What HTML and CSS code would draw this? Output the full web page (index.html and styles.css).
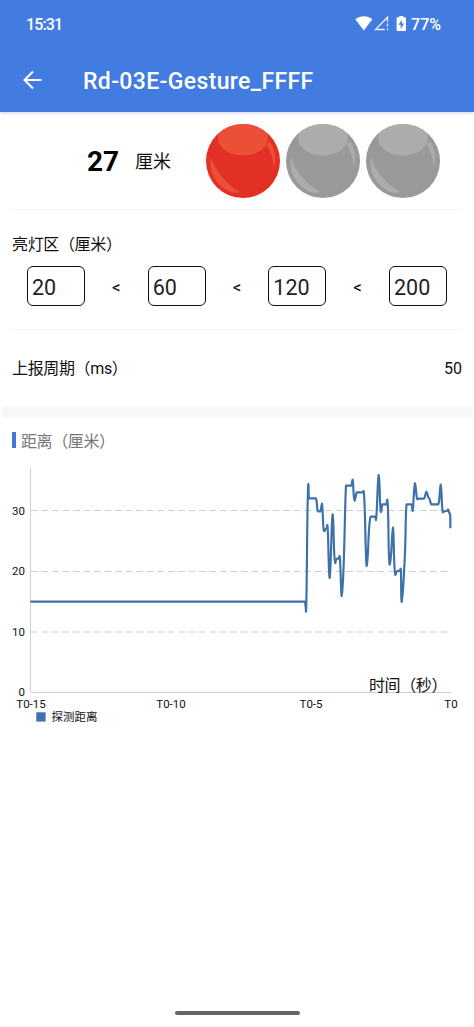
FILE: index.html
```html
<!DOCTYPE html>
<html lang="zh-CN">
<head>
<meta charset="utf-8">
<title>Rd-03E-Gesture_FFFF</title>
<link rel="stylesheet" href="styles.css">
</head>
<body>
<header class="header">
  <div class="status">
    <span class="clock">15:31</span>
    <svg class="status-icons" width="54" height="18" viewBox="0 0 54 18">
      <path d="M.3 4.200C5.300.3 12.300.3 17.300 4.200L8.800 15.500Z" fill="#fff"/>
      <path d="M32.500 7V2.200L20.500 14.500H29.500M32.500 8.500V11.500M32.500 13.500V15.200" fill="none" stroke="#e6f0ff" stroke-width="1.300"/>
      <path d="M44.300 1h4v1.300h1.800q.9 0 .9.900v11.900q0 .9-.9.900h-7.600q-.9 0-.9-.9V3.200q0-.9.900-.9h1.800z" fill="#fff"/>
      <path d="M46.800 4.800L43.500 9.700H45.700V14L49.100 8.500H46.800Z" fill="#427ce0"/>
    </svg>
    <span class="battery">77%</span>
  </div>
  <div class="appbar">
    <svg class="back" width="20" height="20" viewBox="0 0 20 20"><path d="M19.500 10H2.500M11 1.500L2.500 10L11 18.500" fill="none" stroke="#fff" stroke-width="2"/></svg>
    <h1 class="title">Rd-03E-Gesture_FFFF</h1>
  </div>
</header>
<main>
  <section class="reading">
    <span class="value">27</span><span class="unit">厘米</span>
    <svg width="0" height="0" class="defs">
      <defs>
        <clipPath id="disc"><circle cx="110" cy="110" r="110"/></clipPath>
        <g id="shine" clip-path="url(#disc)">
          <ellipse cx="110" cy="42" rx="74" ry="52"/>
          <path d="M180 62Q186 56 187 50Q214 82 202 134Q200 92 180 62Z"/>
          <path d="M14 99Q40 168 101 202Q77 211 50 189Q9 158 14 99Z"/>
        </g>
      </defs>
    </svg>
    <div class="lamps">
      <svg class="lamp red" viewBox="0 0 220 220"><circle cx="110" cy="110" r="110"/><use href="#shine" class="shine"/></svg>
      <svg class="lamp" viewBox="0 0 220 220"><circle cx="110" cy="110" r="110"/><use href="#shine" class="shine"/></svg>
      <svg class="lamp" viewBox="0 0 220 220"><circle cx="110" cy="110" r="110"/><use href="#shine" class="shine"/></svg>
    </div>
  </section>
  <section class="zones">
    <h2 class="label">亮灯区（厘米）</h2>
    <div class="fields">
      <span class="field">20</span><span class="lt">&lt;</span>
      <span class="field">60</span><span class="lt">&lt;</span>
      <span class="field">120</span><span class="lt">&lt;</span>
      <span class="field">200</span>
    </div>
  </section>
  <section class="period"><span class="label">上报周期（ms）</span><span>50</span></section>
  <div class="band"></div>
  <section class="chart-section">
    <h2 class="chart-title">距离（厘米）</h2>
    <svg class="chart" width="474" height="272" viewBox="0 460 474 272">
      <g stroke="#cfcfcf" stroke-width="1" fill="none">
        <path d="M30.500 468V692.500H451" stroke="#d2d2d2"/>
        <path d="M31 510.500H451M31 571.500H451M31 632H451M31 692.500H451" stroke-dasharray="7 3.500"/>
      </g>
      <path transform="translate(295 460) scale(.33333)" class="series" d="M-794 425H29C31 425 32 440 33 455C36 430 36 100 40 72C42 88 40 110 42 115H63C67 125 65 150 69 154H76C79 148 79 134 81 131C84 145 83 205 87 213C89 215 90 208 92 207C96 207 95 200 97 195C101 220 100 345 104 354C108 330 109 180 113 163C117 185 115 300 121 309C123 299 124 296 127 296C132 297 132 290 134 288C137 305 137 390 140 408C148 370 149 140 153 77H169C171 73 171 62 173 59C176 70 174 110 179 122C182 113 182 105 185 97H202C204 97 205 94 206 93C211 120 211 300 215 318C221 295 219 190 227 170H240C242 171 242 178 243 180C247 150 247 65 251 45C256 65 253 145 258 156C260 150 260 139 262 133H274C276 131 275 122 277 119C282 155 279 300 284 314C290 300 290 219 294 203C297 220 296 330 301 345C304 340 304 334 307 333H314C316 330 315 328 317 326C320 345 317 415 320 426C325 400 326 350 329 300C333 230 331 150 335 133H350C352 137 352 150 353 153C356 135 356 84 360 70C364 84 363 110 367 118C369 115 371 116 374 116H387C391 113 391 98 394 95C398 98 398 113 402 115C406 119 405 126 409 133H430C434 126 434 88 437 74C441 90 439 145 444 157C447 153 450 153 456 153C458 150 458 148 460 149C461 158 466 159 466 171V205"/>
      <g class="ticks">
        <text x="25" y="514.500" text-anchor="end">30</text>
        <text x="25" y="575" text-anchor="end">20</text>
        <text x="25" y="635.500" text-anchor="end">10</text>
        <text x="25" y="696" text-anchor="end">0</text>
        <text x="31" y="708" text-anchor="middle">T0-15</text>
        <text x="171" y="708" text-anchor="middle">T0-10</text>
        <text x="311" y="708" text-anchor="middle">T0-5</text>
        <text x="451" y="708" text-anchor="middle">T0</text>
        <text x="51.500" y="721">探测距离</text>
      </g>
      <rect x="36.300" y="712.300" width="9.300" height="9.300" fill="#3d71b1"/>
      <text class="axis-name" x="369" y="691">时间（秒）</text>
    </svg>
  </section>
</main>
<footer class="nav"><div class="handle"></div></footer>
</body>
</html>
```
FILE: styles.css
```css
* { box-sizing: border-box; }
body {
  margin: 0;
  width: 474px;
  height: 1027px;
  display: flex;
  flex-direction: column;
  overflow: hidden;
  background: #fff;
  color: #111;
  font-family: Roboto, "Noto Sans CJK SC", sans-serif;
}
h1, h2 { margin: 0; font-weight: 400; }
main { flex: 1; }
.header { height: 112px; background: #427ce0; color: #fff; box-shadow: 0 1px 3px #c9d6ee; }
.status { height: 48px; padding: 0 33px 0 26px; display: flex; align-items: center; font-size: 16px; font-weight: 500; }
.clock { flex: 1; letter-spacing: -.9px; }
.status-icons { margin-right: 2px; }
.appbar { height: 64px; padding-left: 22px; display: flex; align-items: center; }
.back { margin-right: 41px; }
.title { font-size: 23px; font-weight: 500; letter-spacing: .36px; padding-top: 2px; }
.reading { height: 98px; margin: 0 12px; padding-left: 75px; display: flex; align-items: center; border-bottom: 1px solid #f3f3f3; }
.value { font-size: 28px; font-weight: 700; color: #000; width: 48px; padding-top: 2px; }
.unit { font-size: 18px; width: 71px; padding-bottom: 1px; }
.defs { position: absolute; }
.lamps { display: flex; gap: 6px; }
.lamp { width: 74px; height: 74px; fill: #999; }
.lamp .shine { fill: #acacac; }
.red { fill: #e23124; }
.lamp.red .shine { fill: #eb5037; }
.zones { height: 120px; margin: 0 12px; padding-top: 23px; border-bottom: 1px solid #f3f3f3; }
.label { font-size: 16px; line-height: 24px; letter-spacing: -.35px; }
.fields { margin: 9px 3px 0 15px; display: flex; justify-content: space-between; align-items: center; width: 420px; }
.field { width: 58px; height: 40px; border: 1.5px solid #111; border-radius: 6px; padding-left: 4px; font-size: 21.5px; line-height: 41px; color: #222; }
.lt { font-size: 17px; padding-top: 2px; }
.period { height: 76px; padding: 1px 12px 0; display: flex; align-items: center; justify-content: space-between; font-size: 16px; }
.band { height: 12px; margin: 0 2px; background: #f7f7f7; }
.chart-title { height: 42px; padding: 1px 12px 0; display: flex; align-items: center; gap: 5px; font-size: 16px; letter-spacing: -.4px; color: #777; }
.chart-title::before { content: ""; width: 4px; height: 16px; background: #4179d9; }
.chart { display: block; }
.series { fill: none; stroke: #3d71aa; stroke-width: 6.5; stroke-linejoin: round; }
.ticks { font-size: 11.5px; fill: #111; }
.axis-name { font-size: 16px; fill: #111; letter-spacing: -.4px; }
.nav { height: 20px; display: flex; justify-content: center; padding-top: 4px; }
.handle { width: 125px; height: 4px; border-radius: 2px; background: #666; }
```
